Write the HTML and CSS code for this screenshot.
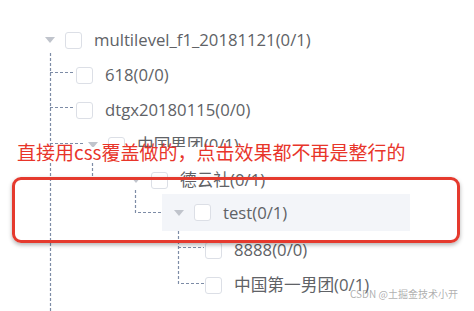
FILE: index.html
```html
<!DOCTYPE html>
<html lang="zh">
<head>
<meta charset="utf-8">
<title>tree</title>
<link rel="stylesheet" href="styles.css">
</head>
<body>
<div class="stage">
  <svg class="connectors" width="474" height="311" viewBox="0 0 474 311">
    <g stroke="#7d8ca6" stroke-width="1.2" stroke-dasharray="3 2" fill="none">
      <path d="M50.5 53 V311"/>
      <path d="M50 72.5 H75"/>
      <path d="M50 107.5 H75"/>
      <path d="M50 143.5 H84"/>
      <path d="M92.5 153 V178.5 H128"/>
      <path d="M135.5 190 V212.5 H168"/>
      <path d="M178.5 226 V283.5 H204"/>
      <path d="M178 247.5 H204"/>
    </g>
  </svg>
  <div class="tree">
    <div class="row lv0"><span class="expander"></span><span class="check"></span><span class="label">multilevel_f1_20181121(0/1)</span></div>
    <div class="row leaf1"><span class="check"></span><span class="label">618(0/0)</span></div>
    <div class="row leaf1"><span class="check"></span><span class="label">dtgx20180115(0/0)</span></div>
    <div class="row lv1"><span class="expander"></span><span class="check"></span><span class="label">中国男团(0/1)</span></div>
    <div class="row lv2"><span class="expander"></span><span class="check"></span><span class="label">德云社(0/1)</span></div>
    <div class="row lv3cur"><div class="node current"><span class="expander"></span><span class="check"></span><span class="label">test(0/1)</span></div></div>
    <div class="row leaf4"><span class="check"></span><span class="label">8888(0/0)</span></div>
    <div class="row leaf4"><span class="check"></span><span class="label">中国第一男团(0/1)</span></div>
  </div>
  <div class="note">直接用css覆盖做的，点击效果都不再是整行的</div>
  <div class="frame"></div>
  <div class="watermark">CSDN @土掘金技术小开</div>
</div>
</body>
</html>
```

FILE: styles.css
```css
html, body {
  margin: 0;
  padding: 0;
  background: #fff;
}
.stage {
  position: relative;
  width: 474px;
  height: 311px;
  overflow: hidden;
  font-family: "Open Sans", "Noto Sans CJK SC", sans-serif;
  color: #606266;
}
.connectors {
  position: absolute;
  left: 0;
  top: 0;
}
.tree {
  position: relative;
  padding-top: 22.5px;
}
.row {
  display: flex;
  align-items: center;
  height: 35px;
  box-sizing: border-box;
}
.lv0 { padding-left: 41px; }
.lv1 { padding-left: 84px; }
.lv2 { padding-left: 127px; }
.lv3cur { padding-left: 162px; }
.leaf1 { padding-left: 76px; }
.leaf4 { padding-left: 205px; }
.node {
  display: flex;
  align-items: center;
}
.node.current {
  width: 248px;
  height: 37px;
  padding-left: 8px;
  box-sizing: border-box;
  background: #f3f5f9;
  margin-bottom: 5px;
}
.expander {
  width: 18px;
  height: 18px;
  display: flex;
  align-items: center;
  justify-content: center;
  margin-right: 6px;
}
.expander::before {
  content: "";
  width: 0;
  height: 0;
  border-left: 5px solid transparent;
  border-right: 5px solid transparent;
  border-top: 6px solid #c0c4cc;
}
.check {
  width: 17px;
  height: 17px;
  box-sizing: border-box;
  border: 1px solid #dcdfe6;
  border-radius: 3px;
  background: #fff;
  flex: none;
}
.label {
  margin-left: 12px;
  font-size: 16.7px;
  white-space: nowrap;
  line-height: 20px;
}
.note {
  position: absolute;
  left: 17px;
  top: 143px;
  height: 18px;
  line-height: 18px;
  font-size: 19px;
  font-family: "Noto Sans CJK SC", sans-serif;
  color: #e8352a;
  white-space: nowrap;
  background: linear-gradient(transparent 4px, #fff 4px);
}
.frame {
  position: absolute;
  left: 12px;
  top: 177px;
  width: 448px;
  height: 66px;
  box-sizing: border-box;
  border: 3.5px solid #e53a2e;
  border-radius: 9px;
  box-shadow: 0 2px 4px rgba(0, 0, 0, 0.3);
}
.watermark {
  position: absolute;
  left: 350px;
  top: 287px;
  font-family: "Noto Sans CJK SC", sans-serif;
  font-size: 10px;
  line-height: 13px;
  color: rgba(140, 140, 140, 0.7);
  white-space: nowrap;
}
```
